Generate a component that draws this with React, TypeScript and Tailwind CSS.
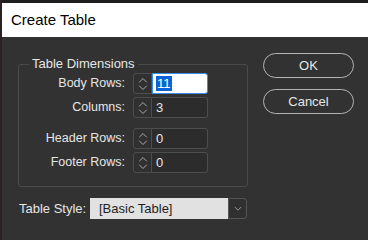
const rows = [
  { label: "Body Rows:", value: "11", active: true },
  { label: "Columns:", value: "3" },
  { label: "Header Rows:", value: "0", gap: true },
  { label: "Footer Rows:", value: "0" },
]

function Chevron({ up, small }: { up?: boolean; small?: boolean }) {
  return (
    <svg width={small ? 8 : 10} height="6" viewBox="0 0 10 6" fill="none">
      <path
        d={up ? "M1.5 5 L5 1.5 L8.5 5" : "M1.5 1 L5 4.5 L8.5 1"}
        stroke="#aaaaaa"
        strokeWidth="1"
        strokeLinecap="round"
        strokeLinejoin="round"
      />
    </svg>
  )
}

function Spinner({ value, active }: { value: string; active?: boolean }) {
  return (
    <div className="flex h-[21px] w-[75px]">
      <div className="flex w-[19px] flex-col items-center justify-center gap-[2px] rounded-l-[3px] border border-[#4d4d4d] bg-[#303030]">
        <Chevron up />
        <Chevron />
      </div>
      {active ? (
        <div className="flex flex-1 items-center rounded-r-[3px] border border-[#378ef0] bg-white pl-[3px]">
          <span className="bg-[#0a64d6] px-[1px] leading-[15px] text-white">{value}</span>
        </div>
      ) : (
        <div className="flex flex-1 items-center rounded-r-[3px] border border-l-0 border-[#4d4d4d] bg-[#2c2c2c] pl-[4px] text-[#e6e6e6]">
          {value}
        </div>
      )}
    </div>
  )
}

export default function App() {
  return (
    <div
      className="flex h-[240px] w-[368px] overflow-hidden bg-[#323232] text-[13px]"
      style={{ fontFamily: '"Liberation Sans", Arial, sans-serif' }}
    >
      <div className="w-[2px] bg-[#2a2222]" />
      <div className="flex flex-1 flex-col">
        <div className="h-[3px] bg-[#1e1e1e]" />
        <div className="flex h-[34px] items-center bg-white pl-[9px] text-[15px] text-black">Create Table</div>
        <div className="flex flex-1 pl-[16px] pt-[19px]">
          <div className="flex w-[230px] flex-col">
            <fieldset className="rounded-[3px] border border-[#4a4a4a] pb-[13px] pt-[1px]">
              <legend className="ml-[10px] px-[3px] leading-[16px] text-[#e6e6e6]">Table Dimensions</legend>
              <div className="flex flex-col">
                {rows.map((r) => (
                  <div
                    key={r.label}
                    className={`flex items-center gap-[8px] ${r.gap ? "mt-[10px]" : "mt-[3px]"} first:mt-0`}
                  >
                    <div className="w-[106px] whitespace-nowrap text-right text-[12.5px] text-[#e6e6e6]">
                      {r.label}
                    </div>
                    <Spinner value={r.value} active={r.active} />
                  </div>
                ))}
              </div>
            </fieldset>
            <div className="mt-[11px] flex items-center gap-[6px]">
              <span className="w-[66px] shrink-0 whitespace-nowrap pl-[1px] text-[#e6e6e6]">Table Style:</span>
              <div className="flex h-[21px] w-[157px]">
                <div className="flex flex-1 items-center bg-[#e1e1e1] pl-[9px] text-[#1e1e1e]">[Basic Table]</div>
                <div className="flex w-[19px] items-center justify-center rounded-r-[3px] border border-[#555] bg-[#303030]">
                  <Chevron small />
                </div>
              </div>
            </div>
          </div>
          <div className="ml-[15px] flex flex-col gap-[11px]">
            <button className="-mt-[3px] h-[25px] w-[91px] rounded-full border-[1.5px] border-[#b4b4b4] text-[#e6e6e6]">
              OK
            </button>
            <button className="h-[25px] w-[91px] rounded-full border-[1.5px] border-[#b4b4b4] text-[#e6e6e6]">
              Cancel
            </button>
          </div>
        </div>
      </div>
    </div>
  )
}
